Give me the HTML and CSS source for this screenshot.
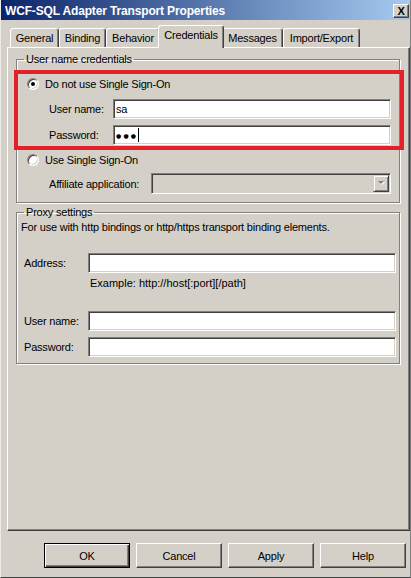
FILE: index.html
```html
<!DOCTYPE html>
<html>
<head>
<meta charset="utf-8">
<link rel="stylesheet" href="styles.css">
</head>
<body>
<div class="window">
  <div class="titlebar">
    <span class="title">WCF-SQL Adapter Transport Properties</span>
    <span class="close">X</span>
  </div>
  <div class="tabs">
    <div class="tab t-general">General</div>
    <div class="tab t-binding">Binding</div>
    <div class="tab t-behavior">Behavior</div>
    <div class="tab t-cred active">Credentials</div>
    <div class="tab t-messages">Messages</div>
    <div class="tab t-import">Import/Export</div>
  </div>
  <div class="panel">
    <fieldset class="group g1">
      <legend>User name credentials</legend>
      <div class="gbody g1-body">
        <div class="radio-row"><span class="radio checked"></span><span>Do not use Single Sign-On</span></div>
        <div class="field-row r-user"><span class="lbl lbl1">User name:</span><div class="textbox">sa</div></div>
        <div class="field-row r-pass"><span class="lbl lbl1">Password:</span><div class="textbox"><span class="dots">●●●</span><span class="caret"></span></div></div>
        <div class="radio-row r-sso"><span class="radio"></span><span>Use Single Sign-On</span></div>
        <div class="field-row r-aff"><span class="lbl lbl-aff">Affiliate application:</span><div class="combo"><span class="drop"><svg width="7" height="5" viewBox="0 0 7 5"><polygon points="1,1 7,1 4,4" fill="#fff"/><polygon points="0,0 6,0 3,3" fill="#808080"/></svg></span></div></div>
      </div>
    </fieldset>
    <fieldset class="group g2">
      <legend>Proxy settings</legend>
      <div class="gbody g2-body">
        <div class="note">For use with http bindings or http/https transport binding elements.</div>
        <div class="field-row r-addr"><span class="lbl lbl2">Address:</span><div class="textbox"></div></div>
        <div class="example">Example: http://host[:port][/path]</div>
        <div class="field-row r-puser"><span class="lbl lbl2">User name:</span><div class="textbox"></div></div>
        <div class="field-row r-ppass"><span class="lbl lbl2">Password:</span><div class="textbox"></div></div>
      </div>
    </fieldset>
  </div>
  <div class="buttons">
    <div class="btn default">OK</div>
    <div class="btn">Cancel</div>
    <div class="btn">Apply</div>
    <div class="btn">Help</div>
  </div>
  <div class="highlight"></div>
</div>
</body>
</html>
```
FILE: styles.css
```css
html, body {
  margin: 0;
  padding: 0;
  background: #d4d0c8;
}

.window {
  position: relative;
  width: 411px;
  height: 578px;
  box-sizing: border-box;
  background: #d4d0c8;
  border-left: 1px solid #ecebe7;
  border-right: 1px solid #808080;
  border-bottom: 1px solid #404040;
  font-family: "Liberation Sans", Arial, sans-serif;
  font-size: 11px;
  letter-spacing: -0.2px;
  color: #000;
}

.titlebar {
  height: 20px;
  display: flex;
  align-items: center;
  justify-content: space-between;
  padding: 1px 1px 0 4px;
  box-sizing: border-box;
  background: linear-gradient(to right, #0a246a, #a6caf0);
}

.title {
  color: #fff;
  font-weight: bold;
  font-size: 12px;
  letter-spacing: -0.15px;
}

.close {
  width: 16px;
  height: 14px;
  box-sizing: border-box;
  background: #d4d0c8;
  border: 1px solid;
  border-color: #fff #404040 #404040 #fff;
  box-shadow: inset -1px -1px #808080;
  font-weight: bold;
  font-size: 11px;
  line-height: 12px;
  text-align: center;
}

.tabs {
  display: flex;
  align-items: flex-end;
  height: 27px;
  box-sizing: border-box;
  padding-left: 9px;
}

.tab {
  height: 19px;
  box-sizing: border-box;
  border: 1px solid;
  border-bottom: none;
  border-color: #fff #404040 #fff #fff;
  box-shadow: inset -1px 0 #808080;
  border-radius: 3px 3px 0 0;
  text-align: center;
  line-height: 18px;
  background: #d4d0c8;
}

.t-general { width: 49px; }
.t-binding { width: 47px; }
.t-behavior { width: 54px; }
.t-cred { width: 66px; }
.t-messages { width: 61px; }
.t-import { width: 77px; }

.tab.active {
  height: 23px;
  margin: 0 -2px -1px;
  position: relative;
  z-index: 2;
  line-height: 19px;
}

.panel {
  margin-left: 6px;
  width: 403px;
  height: 484px;
  box-sizing: border-box;
  border: 1px solid;
  border-color: #fff #404040 #404040 #fff;
  box-shadow: inset -1px -1px #808080;
  padding: 5px 9px 0 8px;
}

.group {
  margin: 0;
  padding: 0;
  min-width: 0;
  border: 1px solid #808080;
  box-shadow: inset 1px 1px #fff, 1px 1px #fff;
}

.group legend {
  padding: 0 2px;
  margin-left: 7px;
  line-height: 13px;
  height: 13px;
}

.g2 { margin-top: 3px; }

.g1-body { padding: 11px 8px 8px 10px; }
.g2-body { padding: 2px 3px 6px 4px; }

.radio-row {
  display: flex;
  align-items: center;
  height: 14px;
  line-height: 14px;
}

.r-sso { margin-top: 8px; }

.radio {
  width: 12px;
  height: 12px;
  box-sizing: border-box;
  border-radius: 50%;
  border: 1px solid;
  border-color: #808080 #fff #fff #808080;
  box-shadow: inset 1px 1px #404040, inset -1px -1px #d4d0c8;
  background: #fff;
  margin-right: 6px;
  display: flex;
  align-items: center;
  justify-content: center;
}

.radio.checked::after {
  content: "";
  width: 4px;
  height: 4px;
  border-radius: 50%;
  background: #000;
}

.field-row {
  display: flex;
  align-items: center;
}

.r-user { margin-top: 8px; padding-left: 22px; }
.r-pass { margin-top: 6px; padding-left: 22px; }
.r-aff { margin-top: 6px; padding-left: 22px; }

.lbl1 { width: 64px; flex: none; }
.lbl-aff { width: 102px; flex: none; }

.r-addr { margin-top: 19px; padding-left: 3px; }
.r-puser { margin-top: 21px; padding-left: 3px; }
.r-ppass { margin-top: 6px; padding-left: 3px; }
.lbl2 { width: 64px; flex: none; }

.note { line-height: 13px; }
.example { margin-top: 4px; margin-left: 69px; line-height: 13px; letter-spacing: 0; }

.textbox {
  flex: 1;
  height: 20px;
  box-sizing: border-box;
  background: #fff;
  border: 1px solid;
  border-color: #808080 #fff #fff #808080;
  box-shadow: inset 1px 1px #404040, inset -1px -1px #d4d0c8;
  padding-left: 2px;
  display: flex;
  align-items: center;
}

.dots {
  font-family: "DejaVu Sans", sans-serif;
  font-size: 6px;
  letter-spacing: 2.2px;
}

.caret {
  width: 1px;
  height: 14px;
  background: #000;
}

.combo {
  flex: 1;
  height: 21px;
  box-sizing: border-box;
  background: #d4d0c8;
  border: 1px solid;
  border-color: #808080 #fff #fff #808080;
  box-shadow: inset 1px 1px #404040, inset -1px -1px #d4d0c8;
  padding: 1px;
  display: flex;
  justify-content: flex-end;
}

.drop {
  width: 16px;
  height: 17px;
  box-sizing: border-box;
  border: 1px solid;
  border-color: #d4d0c8 #404040 #404040 #d4d0c8;
  box-shadow: inset 1px 1px #fff, inset -1px -1px #808080;
  display: flex;
  align-items: center;
  justify-content: center;
}

.buttons {
  display: flex;
  justify-content: flex-end;
  gap: 6px;
  margin-top: 12px;
  padding-right: 4px;
}

.btn {
  width: 86px;
  height: 25px;
  box-sizing: border-box;
  border: 1px solid;
  border-color: #fff #404040 #404040 #fff;
  box-shadow: inset -1px -1px #808080;
  display: flex;
  align-items: center;
  justify-content: center;
}

.btn.default {
  border-color: #000;
  box-shadow: inset 1px 1px #fff, inset -1px -1px #404040, inset -2px -2px #808080;
}

.highlight {
  position: absolute;
  left: 13px;
  top: 70px;
  width: 390px;
  height: 80px;
  box-sizing: border-box;
  border: 4px solid #e3212b;
}
```
